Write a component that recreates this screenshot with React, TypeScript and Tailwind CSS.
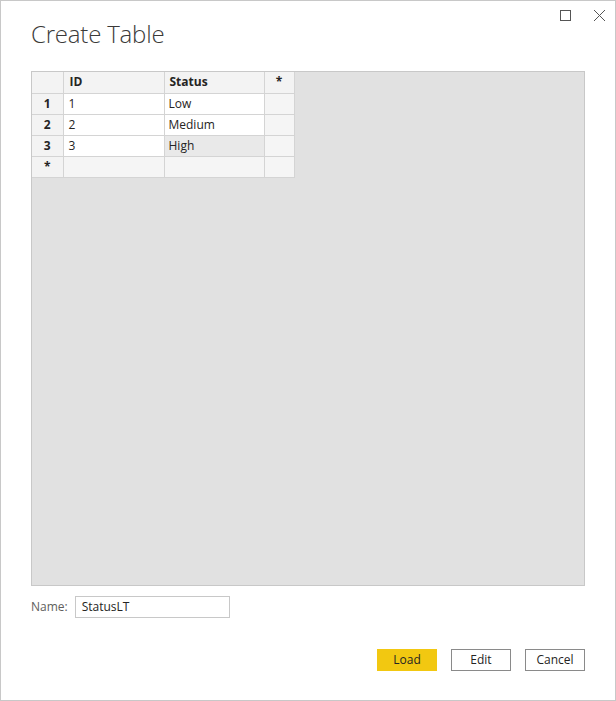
const rows = [
  { n: "1", id: "1", status: "Low" },
  { n: "2", id: "2", status: "Medium" },
  { n: "3", id: "3", status: "High", selected: true },
];

const font = { fontFamily: '"Segoe UI", "Open Sans", "Liberation Sans", sans-serif' };

export default function App() {
  return (
    <div
      className="flex h-[701px] w-[616px] flex-col border border-[#c8c8c8] bg-white text-[12px] text-[#252423]"
      style={font}
    >
      {/* caption buttons */}
      <div className="flex h-[20px] items-start justify-end pr-[10px] pt-[8px] text-[#555]">
        <svg width="12" height="12" viewBox="0 0 12 12" className="mr-[22px]">
          <rect x="1.5" y="1.5" width="10" height="10" fill="none" stroke="currentColor" strokeWidth="1" />
        </svg>
        <svg width="12" height="12" viewBox="0 0 12 12">
          <path d="M1 1L12 12M12 1L1 12" stroke="currentColor" strokeWidth="1" />
        </svg>
      </div>

      <div className="px-[30px]">
        <h1 className="mt-[-3px] text-[24px] font-light leading-[32px] tracking-[-0.2px] text-[#3b3a39]">Create Table</h1>

        <div className="mt-[21px] h-[515px] w-[554px] border border-[#c8c8c8] bg-[#e1e1e1]">
          <table className="border-collapse text-[12px] leading-none">
            <thead>
              <tr className="h-[21px] bg-[#f3f3f3] font-bold">
                <th className="w-[31px] border border-[#d4d4d4] border-l-0 border-t-0" />
                <th className="w-[101px] border border-[#d4d4d4] border-t-0 px-[6px] text-left">ID</th>
                <th className="w-[100px] border border-[#d4d4d4] border-t-0 px-[5px] text-left">Status</th>
                <th className="w-[30px] border border-[#d4d4d4] border-t-0 text-center align-top pt-[4px]">*</th>
              </tr>
            </thead>
            <tbody>
              {rows.map((r) => (
                <tr key={r.n} className="h-[21px]">
                  <td className="border border-[#d4d4d4] border-l-0 bg-[#f3f3f3] text-center font-bold">{r.n}</td>
                  <td className="border border-[#d4d4d4] bg-white px-[5px]">{r.id}</td>
                  <td className={`border border-[#d4d4d4] px-[4px] ${r.selected ? "bg-[#e9e9e9]" : "bg-white"}`}>{r.status}</td>
                  <td className="border border-[#d4d4d4] bg-[#f5f5f5]" />
                </tr>
              ))}
              <tr className="h-[21px]">
                <td className="border border-[#d4d4d4] border-l-0 bg-[#f3f3f3] text-center font-bold">*</td>
                <td className="border border-[#d4d4d4] bg-[#f5f5f5]" />
                <td className="border border-[#d4d4d4] bg-[#f5f5f5]" />
                <td className="border border-[#d4d4d4] bg-[#f5f5f5]" />
              </tr>
            </tbody>
          </table>
        </div>

        <div className="mt-[10px] flex items-center gap-[7px]">
          <span className="text-[#605e5c]">Name:</span>
          <div className="flex h-[22px] w-[155px] items-center border border-[#c8c8c8] px-[6px]">StatusLT</div>
        </div>

        <div className="mt-[31px] flex justify-end gap-[14px]">
          <button className="h-[22px] w-[60px] bg-[#f2c811]">Load</button>
          <button className="h-[22px] w-[60px] border border-[#8a8a8a] bg-white">Edit</button>
          <button className="h-[22px] w-[60px] border border-[#8a8a8a] bg-white">Cancel</button>
        </div>
      </div>
    </div>
  );
}
